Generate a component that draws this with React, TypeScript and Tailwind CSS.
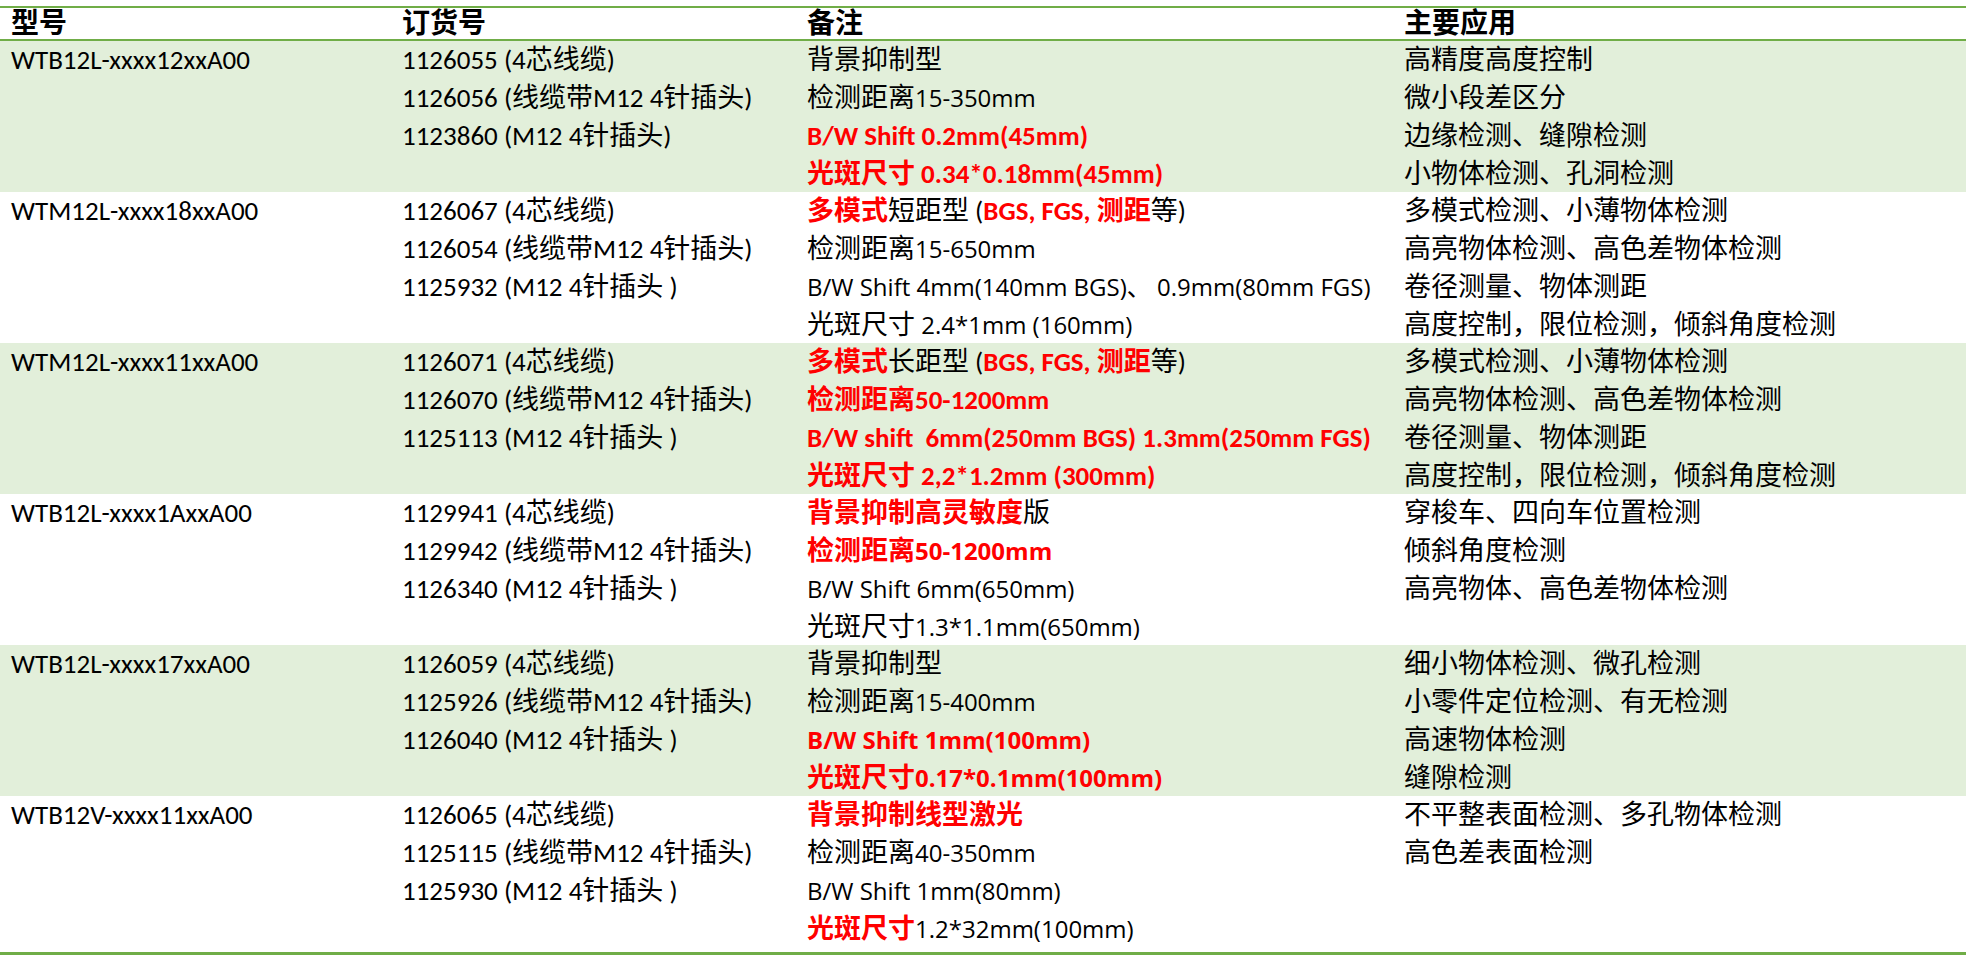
import React from "react"

// Product table — four columns, alternating green rows, green rules top/bottom.
// Latin in Carlito (Calibri metrics), CJK falls through to Noto Sans CJK SC.
const BASE = "font-['Carlito','Noto_Sans_CJK_SC','Noto_Sans_CJK_JP',sans-serif]"

// Latin set in a wider, rounder face (the YaHei-style runs)
function Y({ children, bold = false }: { children: React.ReactNode; bold?: boolean }) {
  return (
    <span className={`font-['Open_Sans','Noto_Sans_CJK_SC',sans-serif] text-[24px] ${bold ? "font-bold" : ""}`}>
      {children}
    </span>
  )
}

// red + bold run
function R({ children }: { children: React.ReactNode }) {
  return <span className="text-[#ff0000] font-bold">{children}</span>
}

type Row = {
  model: string
  orders: string[]
  notes: React.ReactNode[]
  apps: string[]
}

const rows: Row[] = [
  {
    model: "WTB12L-xxxx12xxA00",
    orders: ["1126055 (4芯线缆)", "1126056 (线缆带M12 4针插头)", "1123860 (M12 4针插头)"],
    notes: [
      <>背景抑制型</>,
      <>检测距离<Y>15-350mm</Y></>,
      <R>B/W Shift 0.2mm(45mm)</R>,
      <R>光斑尺寸 0.34*0.18mm(45mm)</R>,
    ],
    apps: ["高精度高度控制", "微小段差区分", "边缘检测、缝隙检测", "小物体检测、孔洞检测"],
  },
  {
    model: "WTM12L-xxxx18xxA00",
    orders: ["1126067 (4芯线缆)", "1126054 (线缆带M12 4针插头)", "1125932 (M12 4针插头 )"],
    notes: [
      <><R>多模式</R>短距型 (<R>BGS, FGS, 测距</R>等)</>,
      <>检测距离<Y>15-650mm</Y></>,
      <Y>B/W Shift 4mm(140mm BGS)、 0.9mm(80mm FGS)</Y>,
      <>光斑尺寸<Y> 2.4*1mm (160mm)</Y></>,
    ],
    apps: ["多模式检测、小薄物体检测", "高亮物体检测、高色差物体检测", "卷径测量、物体测距", "高度控制，限位检测，倾斜角度检测"],
  },
  {
    model: "WTM12L-xxxx11xxA00",
    orders: ["1126071 (4芯线缆)", "1126070 (线缆带M12 4针插头)", "1125113 (M12 4针插头 )"],
    notes: [
      <><R>多模式</R>长距型 (<R>BGS, FGS, 测距</R>等)</>,
      <R>检测距离50-1200mm</R>,
      <R>B/W shift  6mm(250mm BGS) 1.3mm(250mm FGS)</R>,
      <R>光斑尺寸 2,2*1.2mm (300mm)</R>,
    ],
    apps: ["多模式检测、小薄物体检测", "高亮物体检测、高色差物体检测", "卷径测量、物体测距", "高度控制，限位检测，倾斜角度检测"],
  },
  {
    model: "WTB12L-xxxx1AxxA00",
    orders: ["1129941 (4芯线缆)", "1129942 (线缆带M12 4针插头)", "1126340 (M12 4针插头 )"],
    notes: [
      <><R>背景抑制高灵敏度</R>版</>,
      <R>检测距离<Y bold>50-1200mm</Y></R>,
      <Y>B/W Shift 6mm(650mm)</Y>,
      <>光斑尺寸<Y>1.3*1.1mm(650mm)</Y></>,
    ],
    apps: ["穿梭车、四向车位置检测", "倾斜角度检测", "高亮物体、高色差物体检测"],
  },
  {
    model: "WTB12L-xxxx17xxA00",
    orders: ["1126059 (4芯线缆)", "1125926 (线缆带M12 4针插头)", "1126040 (M12 4针插头 )"],
    notes: [
      <>背景抑制型</>,
      <>检测距离<Y>15-400mm</Y></>,
      <R><Y bold>B/W Shift 1mm(100mm)</Y></R>,
      <R>光斑尺寸<Y bold>0.17*0.1mm(100mm)</Y></R>,
    ],
    apps: ["细小物体检测、微孔检测", "小零件定位检测、有无检测", "高速物体检测", "缝隙检测"],
  },
  {
    model: "WTB12V-xxxx11xxA00",
    orders: ["1126065 (4芯线缆)", "1125115 (线缆带M12 4针插头)", "1125930 (M12 4针插头 )"],
    notes: [
      <R>背景抑制线型激光</R>,
      <>检测距离<Y>40-350mm</Y></>,
      <Y>B/W Shift 1mm(80mm)</Y>,
      <><R>光斑尺寸</R><Y>1.2*32mm(100mm)</Y></>,
    ],
    apps: ["不平整表面检测、多孔物体检测", "高色差表面检测"],
  },
]

function Lines({ items }: { items: React.ReactNode[] }) {
  return (
    <>
      {items.map((it, i) => (
        <div key={i} className="whitespace-pre">{it}</div>
      ))}
    </>
  )
}

export default function App() {
  return (
    <div className={`w-[1966px] h-[965px] bg-white pt-[6px] text-black text-[27px] leading-[38px] ${BASE}`}>
      <div className="border-t-2 border-b-[3px] border-[#70ad47]">
        {/* header */}
        <div className="flex h-[33px] items-center font-bold text-[28px] border-b-2 border-[#70ad47] leading-[32px]">
          <div className="w-[402px] pl-[11px]">型号</div>
          <div className="w-[405px]">订货号</div>
          <div className="w-[597px]">备注</div>
          <div className="flex-1">主要应用</div>
        </div>

        {rows.map((r, i) => (
          <div
            key={r.model}
            className={`flex ${i === rows.length - 1 ? "h-[156px]" : "h-[151px]"} ${i % 2 === 0 ? "bg-[#e2efda]" : "bg-white"}`}
          >
            <div className="w-[402px] pl-[11px]">{r.model}</div>
            <div className="w-[405px]"><Lines items={r.orders} /></div>
            <div className="w-[597px]"><Lines items={r.notes} /></div>
            <div className="flex-1"><Lines items={r.apps} /></div>
          </div>
        ))}
      </div>
    </div>
  )
}
